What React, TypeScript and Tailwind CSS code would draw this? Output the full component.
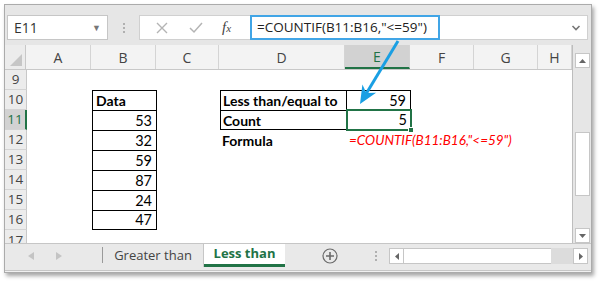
import clsx from 'clsx'

const cols = [
  { key: 'A', w: 'w-[65px]' },
  { key: 'B', w: 'w-[65px]' },
  { key: 'C', w: 'w-[63px]' },
  { key: 'D', w: 'w-[126px]' },
  { key: 'E', w: 'w-[65px]' },
  { key: 'F', w: 'w-[64px]' },
  { key: 'G', w: 'w-[64px]' },
  { key: 'H', w: 'w-[34px]' },
]

const data = ['53', '32', '59', '87', '24', '47']

const cellFont = "font-['Lato',sans-serif] text-[14px] text-black"
const uiFont = "font-['Open_Sans',sans-serif]"

function Cell({ row, col }: { row: number; col: string }) {
  // data table B10:B16
  if (col === 'B' && row >= 10 && row <= 16) {
    const isHead = row === 10
    return (
      <div
        className={clsx(
          'h-full flex items-center px-[3px] border-l border-t border-black',
          row === 16 && 'border-b',
          'border-r',
          isHead ? 'justify-start font-bold' : 'justify-end pr-[4px] text-[14.5px]',
        )}
      >
        {isHead ? 'Data' : data[row - 11]}
      </div>
    )
  }
  if (col === 'D' && (row === 10 || row === 11)) {
    return (
      <div
        className={clsx(
          'h-full flex items-center px-[2px] font-bold border-l border-t border-black whitespace-nowrap',
          row === 11 && 'border-b',
        )}
      >
        {row === 10 ? 'Less than/equal to' : 'Count'}
      </div>
    )
  }
  if (col === 'E' && row === 10) {
    return (
      <div className="h-full flex items-center justify-end pr-[4px] text-[14.5px] border-l border-t border-r border-black">
        59
      </div>
    )
  }
  if (col === 'E' && row === 11) {
    return (
      <div className="relative h-full flex items-center justify-end pr-[4px] text-[14.5px] border-l border-black">
        5
        <div className="absolute -left-px -top-px -right-px -bottom-px border-2 border-[#217346]" />
        <div className="absolute -right-[3px] -bottom-[3px] w-[6px] h-[6px] bg-[#217346] border border-white" />
      </div>
    )
  }
  if (col === 'D' && row === 12) {
    return <div className="h-full flex items-center px-[2px] font-bold">Formula</div>
  }
  if (col === 'E' && row === 12) {
    return (
      <div className="h-full flex items-center pl-[3px] whitespace-nowrap italic text-[13.5px] text-[#ff0000] relative z-10">
        =COUNTIF(B11:B16,"&lt;=59")
      </div>
    )
  }
  return <div className="h-full" />
}

function ArrowOverlay() {
  return (
    <svg className="absolute left-0 top-0 pointer-events-none z-20" width="601" height="285">
      <line x1="398" y1="41" x2="366" y2="94" stroke="#1a9fe3" strokeWidth="3" />
      <path d="M360,104 L362.4,84.5 L366.4,93 L376.1,92.7 Z" fill="#1a9fe3" />
    </svg>
  )
}

export default function App() {
  const rows = [9, 10, 11, 12, 13, 14, 15, 16]

  return (
    <div className="relative w-[601px] h-[285px] bg-white pl-[4px] pt-[4px] overflow-hidden">
      <div className="w-[588px] h-[269px] border border-[#ababab] bg-[#e6e6e6] shadow-[2px_3px_4px_rgba(0,0,0,0.35)] flex flex-col">
        {/* formula bar */}
        <div className={clsx('flex items-center h-[25px] mt-[10px] pl-[2px]', uiFont)}>
          <div className="w-[101px] h-full bg-white border border-[#c6c6c6] flex items-center justify-between pl-[6px] pr-[6px] text-[14px] text-[#333]">
            <span>E11</span>
            <span className="text-[9px] text-[#777]">▼</span>
          </div>
          <div className="w-[31px] flex flex-col items-center gap-[2px]">
            <span className="w-[2px] h-[2px] bg-[#b0b0b0]" />
            <span className="w-[2px] h-[2px] bg-[#b0b0b0]" />
            <span className="w-[2px] h-[2px] bg-[#b0b0b0]" />
          </div>
          <div className="w-[112px] h-full bg-white border border-[#d0d0d0] flex items-center">
            <svg width="14" height="14" viewBox="0 0 14 14" className="ml-[15px]">
              <path d="M2,2 L12,12 M12,2 L2,12" stroke="#b4b4b4" strokeWidth="1.4" />
            </svg>
            <svg width="16" height="14" viewBox="0 0 16 14" className="ml-[19px]">
              <path d="M2,7 L6,11 L14,2" stroke="#b4b4b4" strokeWidth="1.5" fill="none" />
            </svg>
            <span className="ml-[18px] font-['Liberation_Serif',serif] italic text-[15px] text-[#444] leading-none">
              f<span className="text-[11px]">x</span>
            </span>
          </div>
          <div className="w-[337px] h-full bg-white border border-[#d0d0d0] border-l-0 flex items-center">
            <div className="w-[190px] h-[25px] -ml-px border-2 border-[#41a5e6] flex items-center pl-[5px] text-[13.5px] text-[#222] whitespace-nowrap">
              =COUNTIF(B11:B16,"&lt;=59")
            </div>
            <div className="flex-1" />
            <svg width="10" height="8" viewBox="0 0 10 8" className="mr-[6px]">
              <path d="M1.5,2 L5,5.5 L8.5,2" stroke="#777" strokeWidth="1.6" fill="none" />
            </svg>
          </div>
        </div>

        {/* sheet */}
        <div className="mt-[5px] flex h-[198px]">
          <div className="w-[568px] h-full bg-white overflow-hidden border-r border-[#bdbdbd]">
            {/* column header */}
            <div className={clsx('flex h-[25px] bg-[#f3f3f3] border-b border-[#c8c8c8]', uiFont)}>
              <div className="w-[22px] h-full relative border-r border-[#c8c8c8] bg-[#ececec]">
                <svg width="12" height="12" className="absolute right-[3px] bottom-[3px]">
                  <path d="M12,0 L12,12 L0,12 Z" fill="#c6c6c6" />
                </svg>
              </div>
              {cols.map((c) => (
                <div
                  key={c.key}
                  className={clsx(
                    c.w,
                    'h-full flex items-center justify-center text-[14px] border-r border-[#d4d4d4] shrink-0',
                    c.key === 'E'
                      ? 'bg-[#d2d2d2] text-[#217346] border-b-2 border-b-[#217346]'
                      : 'text-[#444]',
                  )}
                >
                  {c.key}
                </div>
              ))}
            </div>
            {/* rows */}
            {rows.map((r) => (
              <div key={r} className="flex h-[20px]">
                <div
                  className={clsx(
                    'w-[22px] shrink-0 h-full flex items-center justify-center text-[13.5px] border-b border-[#d4d4d4]',
                    uiFont,
                    r === 11
                      ? 'bg-[#d2d2d2] text-[#217346] border-r-2 border-r-[#217346]'
                      : 'bg-[#ececec] text-[#444] border-r border-r-[#c8c8c8]',
                  )}
                >
                  {r}
                </div>
                {cols.map((c) => (
                  <div key={c.key} className={clsx(c.w, 'h-full shrink-0', cellFont)}>
                    <Cell row={r} col={c.key} />
                  </div>
                ))}
              </div>
            ))}
            <div className="flex h-[13px] overflow-hidden">
              <div
                className={clsx(
                  'w-[22px] h-[20px] shrink-0 flex items-center justify-center text-[13.5px] bg-[#ececec] text-[#444] border-r border-[#c8c8c8]',
                  uiFont,
                )}
              >
                17
              </div>
            </div>
          </div>
          {/* vertical scrollbar */}
          <div className="flex-1 flex flex-col items-center pt-[8px]">
            <div className="w-[15px] h-[15px] bg-white border border-[#c6c6c6] flex items-center justify-center">
              <svg width="7" height="4"><path d="M0,4 L3.5,0 L7,4 Z" fill="#666" /></svg>
            </div>
            <div className="w-[15px] h-[64px] mt-[64px] bg-white border border-[#c6c6c6]" />
            <div className="flex-1" />
            <div className="w-[15px] h-[15px] bg-white border border-[#c6c6c6] flex items-center justify-center">
              <svg width="7" height="4"><path d="M0,0 L3.5,4 L7,0 Z" fill="#666" /></svg>
            </div>
          </div>
        </div>

        {/* tab bar */}
        <div className={clsx('h-[27px] flex items-start border-t border-[#c6c6c6] bg-[#e9e9e9]', uiFont)}>
          <div className="w-[97px] h-[23px] flex items-center pl-[23px] gap-[22px] text-[#c2c2c2]">
            <svg width="6" height="8"><path d="M6,0 L0,4 L6,8 Z" fill="#c4c4c4" /></svg>
            <svg width="6" height="8"><path d="M0,0 L6,4 L0,8 Z" fill="#c4c4c4" /></svg>
          </div>
          <div className="w-px h-[16px] mt-[3px] bg-[#9a9a9a]" />
          <div className="w-[101px] h-[23px] flex items-center justify-center text-[13px] text-[#444] border-r border-[#c6c6c6]">
            Greater than
          </div>
          <div className="w-[81px] h-[23px] flex items-center justify-center text-[13px] font-bold text-[#217346] bg-white border-b-[3px] border-[#217346]">
            Less than
          </div>
          <div className="w-[88px] h-[23px] flex items-center pl-[37px]">
            <svg width="16" height="16" viewBox="0 0 16 16">
              <circle cx="8" cy="8" r="7" stroke="#6a6a6a" strokeWidth="1.2" fill="none" />
              <path d="M8,4 L8,12 M4,8 L12,8" stroke="#6a6a6a" strokeWidth="1.6" />
            </svg>
          </div>
          <div className="w-[5px] h-[23px] flex flex-col items-center justify-center gap-[2px]">
            <span className="w-[2px] h-[2px] bg-[#b0b0b0]" />
            <span className="w-[2px] h-[2px] bg-[#b0b0b0]" />
            <span className="w-[2px] h-[2px] bg-[#b0b0b0]" />
          </div>
          <div className="ml-[11px] mt-[4px] w-[199px] h-[16px] flex bg-[#dcdcdc]">
            <div className="w-[15px] h-full bg-white border border-[#c6c6c6] flex items-center justify-center">
              <svg width="4" height="7"><path d="M4,0 L0,3.5 L4,7 Z" fill="#666" /></svg>
            </div>
            <div className="w-[147px] h-full bg-white border-y border-[#c6c6c6]" />
            <div className="flex-1" />
            <div className="w-[15px] h-full bg-white border border-[#c6c6c6] flex items-center justify-center">
              <svg width="4" height="7"><path d="M0,0 L4,3.5 L0,7 Z" fill="#666" /></svg>
            </div>
          </div>
        </div>
        <div className="h-[2px] border-t border-[#c6c6c6] bg-[#f0f0f0]" />
      </div>
      <ArrowOverlay />
    </div>
  )
}
